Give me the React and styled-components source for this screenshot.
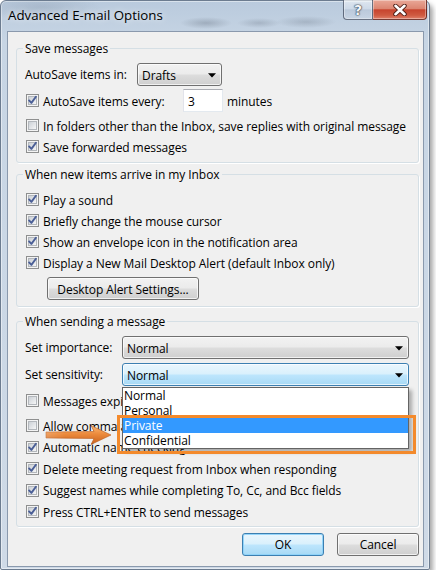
import React from "react";
import styled, { createGlobalStyle } from "styled-components";

const GlobalStyle = createGlobalStyle`
  html, body {
    margin: 0;
    padding: 0;
    background: #ffffff;
  }
  body {
    font-family: "Open Sans", "Noto Sans", "Liberation Sans", sans-serif;
    font-size: 12px;
    letter-spacing: -0.07px;
    color: #000;
  }
  * { box-sizing: border-box; }
`;

/* ---------- window frame ---------- */

const Window = styled.div`
  position: relative;
  width: 430px;
  height: 570px;
  display: flex;
  flex-direction: column;
  border: 1px solid #6c7c90;
  border-radius: 6px 6px 2px 2px;
  background: linear-gradient(180deg, #b9cadd 0px, #c7d5e4 40px, #cfdae7 100%);
  box-shadow: 3px 4px 5px rgba(0, 0, 0, 0.35), inset 0 0 0 1px rgba(255, 255, 255, 0.45);
`;

const TitleBar = styled.div`
  height: 30px;
  flex: none;
  display: flex;
  align-items: flex-start;
  background:
    radial-gradient(ellipse 26px 6px at 205px 22px, rgba(70, 80, 95, 0.28), transparent),
    radial-gradient(ellipse 22px 5px at 258px 22px, rgba(70, 80, 95, 0.22), transparent),
    radial-gradient(ellipse 30px 6px at 305px 21px, rgba(70, 80, 95, 0.22), transparent),
    radial-gradient(ellipse 60px 14px at 40px 6px, rgba(90, 105, 125, 0.18), transparent);
`;

const Title = styled.div`
  padding: 6px 0 0 7px;
  font-size: 13.3px;
  line-height: 17px;
  letter-spacing: 0;
  color: #000;
  text-shadow: 0 0 6px rgba(255, 255, 255, 0.9);
`;

const CaptionButtons = styled.div`
  margin: -1px 2px 0 auto;
  display: flex;
`;

const CaptionButton = styled.div`
  height: 20px;
  width: ${(p) => (p.$close ? 54 : 30)}px;
  display: flex;
  align-items: center;
  justify-content: center;
  border: 1px solid ${(p) => (p.$close ? "rgba(80, 25, 20, 0.75)" : "rgba(55, 65, 85, 0.7)")};
  border-top: none;
  border-left-width: ${(p) => (p.$close ? 0 : 1)}px;
  border-radius: ${(p) => (p.$close ? "0 0 4px 0" : "0 0 0 4px")};
  background: ${(p) =>
    p.$close
      ? "linear-gradient(180deg, #e9a898 0%, #dc8672 45%, #c7442e 52%, #cf5a41 80%, #e0806a 100%)"
      : "linear-gradient(180deg, rgba(255,255,255,0.55) 0%, rgba(225,232,242,0.5) 45%, rgba(185,198,215,0.5) 52%, rgba(205,216,230,0.6) 100%)"};
  box-shadow: inset 0 0 0 1px rgba(255, 255, 255, 0.35);
`;

const HelpGlyph = styled.span`
  font-family: "DejaVu Sans", sans-serif;
  font-weight: 700;
  font-size: 14px;
  line-height: 14px;
  color: #f4f6f9;
  text-shadow: 0 0 1px #2e3846, 0 0 1px #2e3846, 0 0 2px #3e4a5a;
`;

/* ---------- client area ---------- */

const Client = styled.div`
  margin: 0 5px 0 6px;
  height: 536px;
  flex: none;
  display: flex;
  flex-direction: column;
  padding: 9px 4px 0 8px;
  background: #f0f0f0;
  border: 1px solid #8a99ad;
`;

const GroupBox = styled.fieldset`
  margin: ${(p) => p.$mt || 0}px 0 0;
  padding: 7px 9px ${(p) => p.$pb || 0}px 8px;
  min-width: 0;
  display: flex;
  flex-direction: column;
  border: 1px solid #d5dfe5;
  border-radius: 3px;
  box-shadow: 1px 1px 0 #ffffff;
`;

const Legend = styled.legend`
  padding: 0 2px;
  margin-left: -2px;
  line-height: 15px;
  font-size: 12px;
  color: #000;
`;

const Row = styled.div`
  display: flex;
  align-items: center;
  height: ${(p) => p.$h || 21}px;
  margin-top: ${(p) => p.$mt || 0}px;
  white-space: nowrap;
  flex: none;
`;

const FieldLabel = styled.span`
  width: ${(p) => p.$w}px;
  flex: none;
`;

const CheckLabel = styled.span`
  width: ${(p) => (p.$w ? `${p.$w}px` : "auto")};
  padding-top: 1px;
  flex: none;
`;

const CheckSvg = styled.svg`
  flex: none;
  margin: 0 4px 0 1px;
`;

function CheckBox({ checked }) {
  return (
    <CheckSvg width="13" height="13" viewBox="0 0 13 13">
      <defs>
        <linearGradient id="cbFill" x1="0" y1="0" x2="1" y2="1">
          <stop offset="0" stopColor="#c9ced4" />
          <stop offset="1" stopColor="#f8f8f8" />
        </linearGradient>
      </defs>
      <rect x="0.5" y="0.5" width="12" height="12" fill="#f4f4f4" stroke="#8e8f8f" />
      <rect x="2.5" y="2.5" width="8" height="8" fill="url(#cbFill)" stroke="#b3b7bc" />
      {checked && (
        <path
          d="M3.1 6.4 L5.4 8.9 L9.9 2.7"
          fill="none"
          stroke="#4a5e96"
          strokeWidth="1.9"
          strokeLinecap="round"
          strokeLinejoin="round"
        />
      )}
    </CheckSvg>
  );
}

function CheckRow({ checked, children, h, mt }) {
  return (
    <Row $h={h} $mt={mt}>
      <CheckBox checked={checked} />
      <CheckLabel>{children}</CheckLabel>
    </Row>
  );
}

/* ---------- combo boxes, inputs, buttons ---------- */

const ComboAnchor = styled.div`
  position: relative;
  width: ${(p) => (p.$w ? `${p.$w}px` : "auto")};
  flex: ${(p) => (p.$w ? "none" : "1")};
`;

const Combo = styled.div`
  height: 23px;
  display: flex;
  align-items: center;
  justify-content: space-between;
  padding: 1px 5px 0 4px;
  border: 1px solid ${(p) => (p.$focused ? "#3c7fb1" : "#707070")};
  border-radius: 3px;
  background: ${(p) =>
    p.$focused
      ? "linear-gradient(180deg, #eaf6fd 0%, #d9f0fc 49%, #bee6fd 51%, #a7d9f5 100%)"
      : "linear-gradient(180deg, #f2f2f2 0%, #ebebeb 49%, #dddddd 51%, #cfcfcf 100%)"};
  box-shadow: inset 0 0 0 1px rgba(255, 255, 255, 0.7);
`;

const DropArrow = () => (
  <svg width="8" height="5" viewBox="0 0 8 5">
    <polygon points="0,0.2 8,0.2 4,4.6" fill="#000" />
  </svg>
);

const SpinInput = styled.div`
  width: 40px;
  height: 23px;
  display: flex;
  align-items: center;
  padding: 1px 0 0 4px;
  background: #fff;
  border: 1px solid #e3e9ef;
  border-top-color: #abadb3;
  border-left-color: #e2e3ea;
  flex: none;
`;

const Suffix = styled.span`
  margin-left: 4px;
  padding-top: 1px;
`;

const PushButton = styled.div`
  width: ${(p) => p.$w}px;
  height: 23px;
  margin-left: ${(p) => p.$ml || 0}px;
  display: flex;
  align-items: center;
  justify-content: center;
  padding-top: 1px;
  border: 1px solid ${(p) => (p.$default ? "#3c7fb1" : "#707070")};
  border-radius: 3px;
  background: ${(p) =>
    p.$default
      ? "linear-gradient(180deg, #eaf6fd 0%, #d9f0fc 49%, #bee6fd 51%, #a7d9f5 100%)"
      : "linear-gradient(180deg, #f2f2f2 0%, #ebebeb 49%, #dddddd 51%, #cfcfcf 100%)"};
  box-shadow: inset 0 0 0 1px ${(p) => (p.$default ? "rgba(140, 210, 250, 0.9)" : "rgba(255, 255, 255, 0.7)")};
  flex: none;
  white-space: nowrap;
`;

const Footer = styled.div`
  margin-top: 6px;
  display: flex;
  justify-content: flex-end;
  gap: 13px;
`;

/* ---------- open sensitivity list with callout ---------- */

const DropList = styled.ul`
  position: absolute;
  z-index: 10;
  top: calc(100% + 1px);
  left: 0;
  right: 0;
  margin: 0;
  padding: 0;
  list-style: none;
  background: #ffffff;
  border: 1px solid #646464;
  box-shadow: 3px 3px 4px rgba(0, 0, 0, 0.3);
`;

const DropItem = styled.li`
  height: 15px;
  line-height: 15px;
  padding-left: 1px;
  background: ${(p) => (p.$selected ? "#3399ff" : "transparent")};
  color: ${(p) => (p.$selected ? "#ffffff" : "#000000")};
`;

const CalloutFrame = styled.div`
  position: absolute;
  z-index: 11;
  left: -5px;
  top: 52px;
  width: 299px;
  height: 39px;
  border: 3px solid #f38a2c;
  pointer-events: none;
`;

const CalloutArrow = styled.svg`
  position: absolute;
  z-index: 11;
  left: -77px;
  top: 61px;
`;

function SensitivityCombo() {
  const options = ["Normal", "Personal", "Private", "Confidential"];
  return (
    <ComboAnchor>
      <Combo $focused>
        <span>Normal</span>
        <DropArrow />
      </Combo>
      <DropList>
        {options.map((o) => (
          <DropItem key={o} $selected={o === "Private"}>
            {o}
          </DropItem>
        ))}
      </DropList>
      <CalloutFrame />
      <CalloutArrow width="67" height="22" viewBox="0 0 67 22">
        <defs>
          <linearGradient id="arrowFill" x1="0" y1="0" x2="0" y2="1">
            <stop offset="0" stopColor="#f8b878" />
            <stop offset="0.45" stopColor="#ec8a3c" />
            <stop offset="1" stopColor="#c8611d" />
          </linearGradient>
          <linearGradient id="arrowFade" x1="0" y1="0" x2="1" y2="0">
            <stop offset="0" stopColor="#fff" stopOpacity="0.8" />
            <stop offset="0.3" stopColor="#fff" stopOpacity="1" />
          </linearGradient>
          <mask id="arrowMask">
            <rect width="67" height="22" fill="url(#arrowFade)" />
          </mask>
        </defs>
        <path
          d="M1 8 L49 7.5 L46 1.5 L66 11 L46 20.5 L49 14.5 L1 14 Z"
          fill="url(#arrowFill)"
          stroke="#b85a1c"
          strokeWidth="0.6"
          mask="url(#arrowMask)"
        />
      </CalloutArrow>
    </ComboAnchor>
  );
}

export default function App() {
  return (
    <>
      <GlobalStyle />
      <Window>
        <TitleBar>
          <Title>Advanced E-mail Options</Title>
          <CaptionButtons>
            <CaptionButton>
              <HelpGlyph>?</HelpGlyph>
            </CaptionButton>
            <CaptionButton $close>
              <svg width="14" height="12" viewBox="0 0 14 12">
                <path d="M2.5 1.8 L11.5 10.2 M11.5 1.8 L2.5 10.2" stroke="#4a1a12" strokeWidth="4.4" strokeLinecap="round" />
                <path d="M2.5 1.8 L11.5 10.2 M11.5 1.8 L2.5 10.2" stroke="#ffffff" strokeWidth="2.6" strokeLinecap="round" />
              </svg>
            </CaptionButton>
          </CaptionButtons>
        </TitleBar>

        <Client>
          <GroupBox $pb={5}>
            <Legend>Save messages</Legend>
            <Row $h={23}>
              <FieldLabel $w={112}>AutoSave items in:</FieldLabel>
              <ComboAnchor $w={85}>
                <Combo>
                  <span>Drafts</span>
                  <DropArrow />
                </Combo>
              </ComboAnchor>
            </Row>
            <Row $h={23} $mt={3}>
              <CheckBox checked />
              <CheckLabel $w={140}>AutoSave items every:</CheckLabel>
              <SpinInput>3</SpinInput>
              <Suffix>minutes</Suffix>
            </Row>
            <CheckRow mt={3}>In folders other than the Inbox, save replies with original message</CheckRow>
            <CheckRow checked>Save forwarded messages</CheckRow>
          </GroupBox>

          <GroupBox $mt={4} $pb={6}>
            <Legend>When new items arrive in my Inbox</Legend>
            <CheckRow checked>Play a sound</CheckRow>
            <CheckRow checked>Briefly change the mouse cursor</CheckRow>
            <CheckRow checked>Show an envelope icon in the notification area</CheckRow>
            <CheckRow checked>Display a New Mail Desktop Alert (default Inbox only)</CheckRow>
            <Row $h={23} $mt={4}>
              <PushButton $w={152} $ml={22}>Desktop Alert Settings...</PushButton>
            </Row>
          </GroupBox>

          <GroupBox $mt={7} $pb={3}>
            <Legend>When sending a message</Legend>
            <Row $h={23}>
              <FieldLabel $w={97}>Set importance:</FieldLabel>
              <ComboAnchor>
                <Combo>
                  <span>Normal</span>
                  <DropArrow />
                </Combo>
              </ComboAnchor>
            </Row>
            <Row $h={23} $mt={4}>
              <FieldLabel $w={97}>Set sensitivity:</FieldLabel>
              <SensitivityCombo />
            </Row>
            <CheckRow mt={4}>Messages expire after:</CheckRow>
            <CheckRow mt={4} h={21.5}>Allow comma as address separator</CheckRow>
            <CheckRow checked h={21.5}>Automatic name checking</CheckRow>
            <CheckRow checked h={21.5}>Delete meeting request from Inbox when responding</CheckRow>
            <CheckRow checked h={21.5}>Suggest names while completing To, Cc, and Bcc fields</CheckRow>
            <CheckRow checked h={21.5}>Press CTRL+ENTER to send messages</CheckRow>
          </GroupBox>

          <Footer>
            <PushButton $w={82} $default>OK</PushButton>
            <PushButton $w={82}>Cancel</PushButton>
          </Footer>
        </Client>
      </Window>
    </>
  );
}
